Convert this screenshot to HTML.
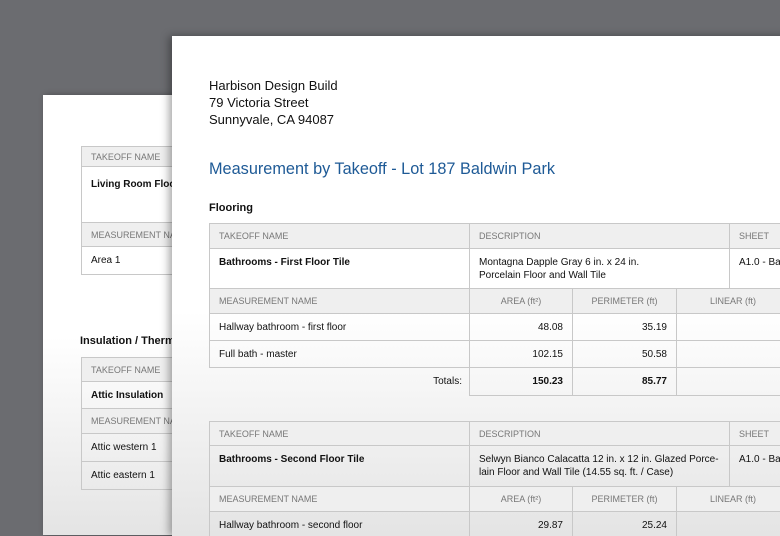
<!DOCTYPE html><html><head><style>
*{margin:0;padding:0;box-sizing:border-box}
body{width:780px;height:534px;overflow:hidden;background:#6b6c70;position:relative;font-family:"Liberation Sans",Arial,sans-serif;color:#111}
.pg{position:absolute;background:linear-gradient(#fff 0%,#fff 55%,#e4e4e4 100%)}
.c{position:absolute;border:1px solid #c8c8c8;font-size:10px;padding-left:9px;display:flex;align-items:center}
.h{background:#efefef;color:#777;font-size:9px}
.b{font-weight:bold}
.r{justify-content:flex-end;padding-right:9px}
.ct{justify-content:center;padding-left:0}
</style></head><body>
<div class="pg" style="left:43px;top:95px;width:200px;height:440px;box-shadow:2px 0 6px rgba(0,0,0,.3)">
</div>
<div style="position:absolute;left:43px;top:95px;width:140px;height:440px">
<div class="c h" style="left:38px;top:51px;width:120px;height:21px">TAKEOFF NAME</div>
<div class="c b" style="left:38px;top:71px;width:120px;height:57px;align-items:flex-start;padding-top:12px">Living Room Floor</div>
<div class="c h" style="left:38px;top:127px;width:120px;height:25px">MEASUREMENT NAME</div>
<div class="c" style="left:38px;top:151px;width:120px;height:29px">Area 1</div>
<div style="position:absolute;left:37px;top:240px;font-size:11px;font-weight:bold;white-space:nowrap">Insulation / Thermal</div>
<div class="c h" style="left:38px;top:262px;width:120px;height:25px">TAKEOFF NAME</div>
<div class="c b" style="left:38px;top:286px;width:120px;height:28px">Attic Insulation</div>
<div class="c h" style="left:38px;top:313px;width:120px;height:26px">MEASUREMENT NAME</div>
<div class="c" style="left:38px;top:338px;width:120px;height:29px">Attic western 1</div>
<div class="c" style="left:38px;top:366px;width:120px;height:29px">Attic eastern 1</div>
</div>
<div class="pg" style="left:172px;top:36px;width:620px;height:500px;box-shadow:-3px 0 8px rgba(0,0,0,.35);overflow:hidden">
<div style="position:absolute;left:37px;top:41px;font-size:13px;line-height:17px">Harbison Design Build<br>79 Victoria Street<br>Sunnyvale, CA 94087</div>
<div style="position:absolute;left:37px;top:124px;font-size:16.3px;color:#1e5a96">Measurement by Takeoff - Lot 187 Baldwin Park</div>
<div style="position:absolute;left:37px;top:166px;font-size:11px;font-weight:bold">Flooring</div>
<div style="position:absolute;left:37px;top:187px">
<div class="c h" style="left:0;top:0;width:261px;height:26px">TAKEOFF NAME</div>
<div class="c h" style="left:260px;top:0;width:261px;height:26px">DESCRIPTION</div>
<div class="c h" style="left:520px;top:0;width:100px;height:26px">SHEET</div>
<div class="c b" style="left:0;top:25px;width:261px;height:41px;align-items:flex-start;padding-top:8px">Bathrooms - First Floor Tile</div>
<div class="c" style="left:260px;top:25px;width:261px;height:41px;line-height:13px">Montagna Dapple Gray 6 in. x 24 in.<br>Porcelain Floor and Wall Tile</div>
<div class="c" style="left:520px;top:25px;width:100px;height:41px;align-items:flex-start;padding-top:8px">A1.0 - Bath</div>
<div class="c h" style="left:0;top:65px;width:261px;height:26px">MEASUREMENT NAME</div>
<div class="c h ct" style="left:260px;top:65px;width:104px;height:26px">AREA (ft²)</div>
<div class="c h ct" style="left:363px;top:65px;width:105px;height:26px">PERIMETER (ft)</div>
<div class="c h ct" style="left:467px;top:65px;width:153px;height:26px;justify-content:flex-start;padding-left:33px">LINEAR (ft)</div>
<div class="c" style="left:0;top:90px;width:261px;height:28px">Hallway bathroom - first floor</div>
<div class="c r" style="left:260px;top:90px;width:104px;height:28px">48.08</div>
<div class="c r" style="left:363px;top:90px;width:105px;height:28px">35.19</div>
<div class="c" style="left:467px;top:90px;width:153px;height:28px"></div>
<div class="c" style="left:0;top:117px;width:261px;height:28px">Full bath - master</div>
<div class="c r" style="left:260px;top:117px;width:104px;height:28px">102.15</div>
<div class="c r" style="left:363px;top:117px;width:105px;height:28px">50.58</div>
<div class="c" style="left:467px;top:117px;width:153px;height:28px"></div>
<div style="position:absolute;left:0;top:153px;width:253px;text-align:right;font-size:10px">Totals:</div>
<div class="c r b" style="left:260px;top:144px;width:104px;height:29px">150.23</div>
<div class="c r b" style="left:363px;top:144px;width:105px;height:29px">85.77</div>
<div class="c" style="left:467px;top:144px;width:153px;height:29px"></div>
</div>
<div style="position:absolute;left:37px;top:385px">
<div class="c h" style="left:0;top:0;width:261px;height:25px">TAKEOFF NAME</div>
<div class="c h" style="left:260px;top:0;width:261px;height:25px">DESCRIPTION</div>
<div class="c h" style="left:520px;top:0;width:100px;height:25px">SHEET</div>
<div class="c b" style="left:0;top:24px;width:261px;height:42px;align-items:flex-start;padding-top:8px">Bathrooms - Second Floor Tile</div>
<div class="c" style="left:260px;top:24px;width:261px;height:42px;line-height:13px">Selwyn Bianco Calacatta 12 in. x 12 in. Glazed Porce-<br>lain Floor and Wall Tile (14.55 sq. ft. / Case)</div>
<div class="c" style="left:520px;top:24px;width:100px;height:42px;align-items:flex-start;padding-top:8px">A1.0 - Bath</div>
<div class="c h" style="left:0;top:65px;width:261px;height:26px">MEASUREMENT NAME</div>
<div class="c h ct" style="left:260px;top:65px;width:104px;height:26px">AREA (ft²)</div>
<div class="c h ct" style="left:363px;top:65px;width:105px;height:26px">PERIMETER (ft)</div>
<div class="c h ct" style="left:467px;top:65px;width:153px;height:26px;justify-content:flex-start;padding-left:33px">LINEAR (ft)</div>
<div class="c" style="left:0;top:90px;width:261px;height:28px">Hallway bathroom - second floor</div>
<div class="c r" style="left:260px;top:90px;width:104px;height:28px">29.87</div>
<div class="c r" style="left:363px;top:90px;width:105px;height:28px">25.24</div>
<div class="c" style="left:467px;top:90px;width:153px;height:28px"></div>
</div>
</div>
</body></html>
